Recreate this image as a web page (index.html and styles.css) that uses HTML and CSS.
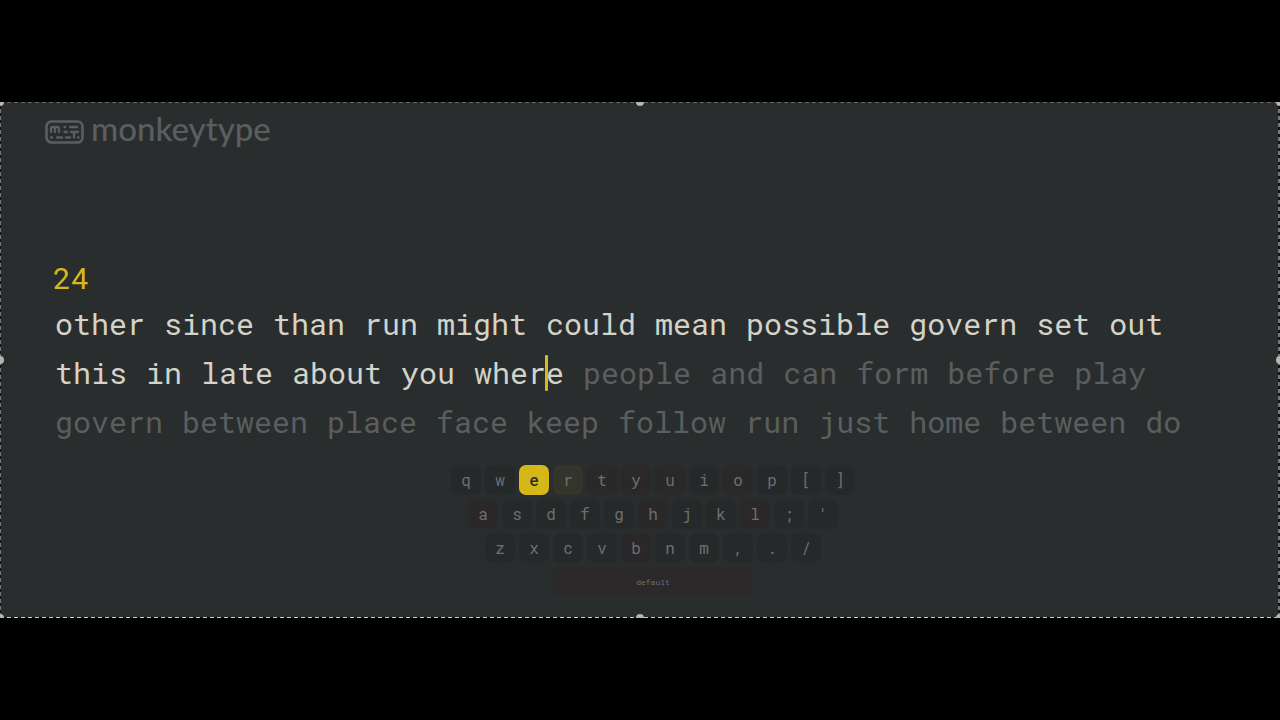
FILE: index.html
```
<!DOCTYPE html>
<html lang="en">
<head>
	<meta charset="utf-8" />
	<title>monkeytype</title>
	<link rel="stylesheet" href="styles.css">
</head>
<body>
	<div class="stage">
		<div class="line top"></div>
		<div class="line bottom"></div>
		<div class="side left"></div>
		<div class="side right"></div>
		<span class="handle nw"></span>
		<span class="handle n"></span>
		<span class="handle ne"></span>
		<span class="handle w"></span>
		<span class="handle e"></span>
		<span class="handle sw"></span>
		<span class="handle s"></span>
		<span class="handle se"></span>

		<header class="logo">
			<svg class="icon" width="40" height="24" viewBox="0 0 40 24" fill="none" stroke="currentColor" stroke-width="2.3" stroke-linecap="round" stroke-linejoin="round">
				<rect x="2.500" y="1.500" width="36" height="21" rx="5" stroke-width="2.6" />
				<path d="M7 12V8.500Q7 7 8.500 7H9.500Q11 7 11 8.500V12M11 8.500Q11 7 12.500 7H13.500Q15 7 15 8.500V12" />
				<path d="M20.500 7H21M26 7H33M20.500 12H23M27 12H34M30 12V17.500M7 17.500H8M13 17.500H18M22 17.500H26M34 17.500H34.500" />
			</svg>
			<span class="name">monkeytype</span>
		</header>

		<main class="test">
			<div class="timer">24</div>
			<div class="words">
				<div class="row typed">
					<span>other</span><span>since</span><span>than</span><span>run</span><span>might</span><span>could</span><span>mean</span><span>possible</span><span>govern</span><span>set</span><span>out</span>
				</div>
				<div class="row">
					<span class="typed">this</span><span class="typed">in</span><span class="typed">late</span><span class="typed">about</span><span class="typed">you</span><span class="typed">wher<span class="caret"></span>e</span><span>people</span><span>and</span><span>can</span><span>form</span><span>before</span><span>play</span>
				</div>
				<div class="row">
					<span>govern</span><span>between</span><span>place</span><span>face</span><span>keep</span><span>follow</span><span>run</span><span>just</span><span>home</span><span>between</span><span>do</span>
				</div>
			</div>

			<div class="keymap">
				<div class="keys">
					<div class="key">q</div><div class="key">w</div><div class="key active">e</div><div class="key fading">r</div><div class="key warm">t</div><div class="key warm">y</div><div class="key warm">u</div><div class="key">i</div><div class="key warm">o</div><div class="key">p</div><div class="key">[</div><div class="key">]</div>
				</div>
				<div class="keys">
					<div class="key warm">a</div><div class="key">s</div><div class="key">d</div><div class="key">f</div><div class="key">g</div><div class="key warm">h</div><div class="key">j</div><div class="key">k</div><div class="key warm">l</div><div class="key">;</div><div class="key">'</div>
				</div>
				<div class="keys">
					<div class="key">z</div><div class="key">x</div><div class="key">c</div><div class="key">v</div><div class="key warm">b</div><div class="key">n</div><div class="key">m</div><div class="key">,</div><div class="key">.</div><div class="key">/</div>
				</div>
				<div class="keys">
					<div class="key space">default</div>
				</div>
			</div>
		</main>
	</div>
</body>
</html>
```
FILE: styles.css
```
* {
	box-sizing: border-box;
}

body {
	margin: 0;
	min-height: 100vh;
	display: flex;
	flex-direction: column;
	justify-content: center;
	background: #000;
	color: #5b5e5f;
	font-family: "Roboto Mono", "DejaVu Sans Mono", monospace;
}

.stage {
	position: relative;
	overflow: hidden;
	padding: 10px 27px 21px 44px;
	background: #2a2d2e;
}

/* selection frame */
.line,
.side {
	position: absolute;
}

.line {
	left: 0;
	right: 0;
	height: 1px;
	background: repeating-linear-gradient(90deg, #666 0 4px, #222 4px 7px);
}

.side {
	top: 0;
	bottom: 0;
	width: 1px;
	background: repeating-linear-gradient(#777 0 4px, #111 4px 7px);
}

.top { top: 0; }
.bottom {
	bottom: 0;
	background: repeating-linear-gradient(90deg, #ccc 0 4px, #111 4px 7px);
}
.left { left: 0; }
.right {
	right: 0;
	width: 2px;
}

.handle {
	position: absolute;
	width: 8px;
	height: 8px;
	margin: -4px;
	border-radius: 50%;
	background: #b5b5b5;
}

.nw { left: 0; top: 0; }
.n { left: 50%; top: 0; }
.ne { left: 100%; top: 0; }
.w { left: 0; top: 50%; }
.e { left: 100%; top: 50%; }
.sw { left: 0; top: 100%; }
.s { left: 50%; top: 100%; }
.se { left: 100%; top: 100%; }

.logo {
	display: flex;
	align-items: center;
	gap: 7px;
	height: 40px;
}

.icon {
	flex: none;
}

.name {
	font: 500 33px/36px Lato, sans-serif;
	padding-bottom: 8px;
}

.test {
	margin-top: 104px;
	padding-left: 9px;
}

.timer {
	color: #d8b91c;
	font-size: 30px;
	line-height: 43px;
}

.words {
	padding-left: 2px;
	font-size: 30px;
	line-height: 49px;
}

.row {
	display: flex;
	gap: 19px;
}

.typed {
	color: #d3d3c9;
}

.caret {
	position: absolute;
	width: 3px;
	height: 36px;
	margin: 7px 0 0 -1px;
	border-radius: 1px;
	background: #d8b91c;
}

.keymap {
	display: flex;
	flex-direction: column;
	gap: 4px;
	margin-top: 19px;
}

.keys {
	display: flex;
	justify-content: center;
	gap: 4px;
}

.key {
	width: 30px;
	height: 30px;
	border-radius: 7px;
	background: #26292a;
	color: #6d6f70;
	font-size: 16px;
	line-height: 30px;
	text-align: center;
}

.warm {
	background: #2a2829;
}

.fading {
	background: #34352a;
}

.active {
	background: #d5b717;
	color: #2b2e2f;
	font-weight: 500;
}

.space {
	width: 200px;
	background: #2b292a;
	font-size: 8px;
}
```
